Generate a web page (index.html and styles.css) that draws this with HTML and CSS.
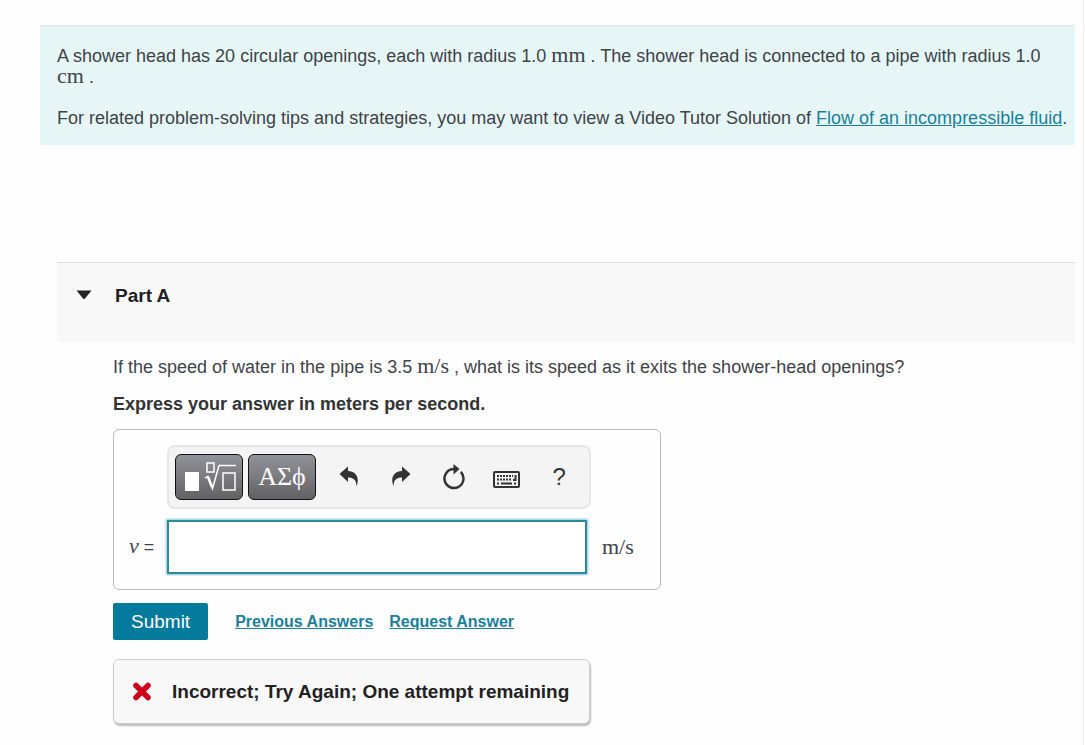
FILE: index.html
```html
<!DOCTYPE html>
<html lang="en">
<head>
    <meta charset="UTF-8">
    <meta name="viewport" content="width=device-width, initial-scale=1.0">
    <title>Shower Head Flow</title>
    <link rel="stylesheet" href="styles.css">
</head>
<body>

<main class="page">
    <section class="intro">
        <p>A shower head has 20 circular openings, each with radius 1.0 <span class="unit">mm</span> . The shower head is connected to a pipe with radius 1.0 <span class="unit">cm</span> .</p>
        <p>For related problem-solving tips and strategies, you may want to view a Video Tutor Solution of <a href="#">Flow of an incompressible fluid</a>.</p>
    </section>

    <section class="part">
        <header class="part-header">
            <button type="button" class="collapse" aria-label="Collapse Part A">
                <svg width="16" height="10" viewBox="0 0 16 10"><path d="M.5 .5h15L9 8.500q-1 1-2 0z" fill="#222"/></svg>
            </button>
            <h2>Part A</h2>
        </header>

        <form class="part-body">
            <p class="question">If the speed of water in the pipe is 3.5 <span class="unit">m/s</span> , what is its speed as it exits the shower-head openings?</p>
            <p class="instruction">Express your answer in meters per second.</p>

            <div class="answer-box">
                <div class="toolbar">
                    <button type="button" class="palette" aria-label="Templates">
                        <svg width="56" height="32" viewBox="0 0 56 32" fill="none" stroke="#fff">
                            <rect x="4" y="11" width="14" height="19" fill="#fff" stroke="none"/>
                            <rect x="26" y="2" width="7" height="9" stroke-width="1.500"/>
                            <path d="M24 17l3-1.500 4.500 12L38 4.500h17" stroke-width="1.500"/>
                            <path d="M27 16l4 10" stroke-width="2.500"/>
                            <rect x="42" y="12" width="12" height="17" stroke-width="1.500"/>
                        </svg>
                    </button>
                    <button type="button" class="palette" aria-label="Greek symbols">ΑΣϕ</button>
                    <button type="button" class="tool" aria-label="Undo">
                        <svg width="20" height="22" viewBox="0 0 20 22"><path d="M.5 8L9 .5V5c8 .2 12 6.500 8.500 15.500C17.500 14 14.500 11.500 9 11.500V16z" fill="#333"/></svg>
                    </button>
                    <button type="button" class="tool" aria-label="Redo">
                        <svg width="20" height="22" viewBox="0 0 20 22"><path d="M19.500 8L11 .5V5C3 5.200-1 11.500 2.500 20.500 2.500 14 5.500 11.500 11 11.500V16z" fill="#333"/></svg>
                    </button>
                    <button type="button" class="tool" aria-label="Reset">
                        <svg width="24" height="26" viewBox="0 0 24 26"><path d="M12 5a9.500 9.500 0 1 0 6.800 2.900" fill="none" stroke="#333" stroke-width="2.500"/><path d="M11.500 0l6 5-6 5.500z" fill="#333"/></svg>
                    </button>
                    <button type="button" class="tool keyboard" aria-label="Keyboard shortcuts">
                        <svg width="27" height="17" viewBox="0 0 27 17" fill="none" stroke="#333">
                            <rect x="1" y="1" width="25" height="15" rx="1" stroke-width="2"/>
                            <path d="M4 5h16M4 8.500h15" stroke-width="2" stroke-dasharray="2 1"/>
                            <path d="M22.500 4v5h-2.500" stroke-width="2"/>
                            <path d="M4 12.500h2M8 12.500h11M21 12.500h2" stroke-width="2"/>
                        </svg>
                    </button>
                    <button type="button" class="tool help" aria-label="Help">?</button>
                </div>
                <label class="variable" for="answer"><i>v</i> =</label>
                <input type="text" id="answer" class="answer">
                <span class="unit">m/s</span>
            </div>

            <div class="actions">
                <button type="submit" class="submit">Submit</button>
                <a href="#">Previous Answers</a>
                <a href="#">Request Answer</a>
            </div>

            <div class="feedback">
                <svg width="20" height="20" viewBox="0 0 20 20"><path d="M4 3.500l12 12M16 3.500l-12 12" stroke="#d0021b" stroke-width="5.500" stroke-linecap="round"/></svg>
                <span>Incorrect; Try Again; One attempt remaining</span>
            </div>
        </form>
    </section>
</main>

</body>
</html>
```
FILE: styles.css
```css
* {
    box-sizing: border-box;
}

body {
    margin: 0;
    background-color: #fefefe;
    color: #3e4347;
    font-family: "Liberation Sans", Arial, sans-serif;
    font-size: 18px;
    line-height: 21px;
}

p, h2 {
    margin: 0;
}

a {
    color: #1a7f9c;
}

button {
    font-family: inherit;
    cursor: pointer;
}

svg {
    display: block;
}

.page {
    min-height: 100vh;
    margin-right: 1px;
    padding: 25px 8px 20px 40px;
    border-right: 1px solid #eee;
}

.unit {
    font-family: "Liberation Serif", "Times New Roman", serif;
    font-size: 22px;
    line-height: 0;
}

.intro {
    display: flex;
    flex-direction: column;
    gap: 20px;
    padding: 20px 4px 16px 17px;
    border-top: 1px solid #dde6e5;
    background-color: #e6f6f7;
}

.part {
    margin: 117px 0 0 17px;
}

.part-header {
    display: flex;
    gap: 23px;
    height: 80px;
    padding: 22px 19px;
    border-top: 1px solid #ddd;
    background-color: #f8f8f8;
}

.collapse {
    align-self: flex-start;
    padding: 5px 0;
    border: none;
    background: none;
}

.part-header h2 {
    color: #222;
    font-size: 19px;
}

.part-body {
    padding: 15px 0 0 56px;
}

.instruction {
    margin-top: 16px;
    color: #333;
    font-weight: bold;
}

.answer-box {
    display: grid;
    grid-template-columns: 38px 420px auto;
    row-gap: 11px;
    align-items: center;
    width: fit-content;
    margin-top: 14px;
    padding: 15px 26px 15px 15px;
    border: 1px solid #bbb;
    border-radius: 6px;
}

.answer-box .unit {
    padding-left: 15px;
}

.toolbar {
    display: flex;
    grid-column: 2 / 4;
    align-items: center;
    gap: 5px;
    width: 424px;
    height: 64px;
    padding: 0 6px;
    border: 2px solid #e6e6e6;
    border-radius: 8px;
    background-color: #f4f4f4;
}

.palette {
    display: flex;
    align-items: center;
    justify-content: center;
    width: 68px;
    height: 46px;
    padding: 0;
    border: 1px solid #111;
    border-radius: 6px;
    background: linear-gradient(#92929a, #626264);
    color: #fff;
    font-family: "Liberation Serif", "Times New Roman", serif;
    font-size: 26px;
}

.tool {
    display: flex;
    flex: 1;
    align-items: center;
    justify-content: center;
    padding: 0;
    border: none;
    background: none;
    color: #333;
}

.palette + .tool {
    margin-left: 4px;
}

.keyboard {
    padding-top: 4px;
}

.help {
    font-size: 24px;
}

.variable {
    font-size: 18px;
}

.variable i {
    font-family: "Liberation Serif", "Times New Roman", serif;
    font-size: 22px;
    line-height: 0;
}

.answer {
    width: 100%;
    height: 54px;
    padding: 0 10px;
    border: 2px solid #2b8a9c;
    box-shadow: 0 0 2px 1px #8cc8dc;
    background-color: #fff;
    font-size: 20px;
    outline: none;
}

.actions {
    display: flex;
    align-items: center;
    gap: 16px;
    margin-top: 13px;
    font-size: 16px;
    font-weight: bold;
}

.submit {
    height: 37px;
    margin-right: 11px;
    padding: 0 18px;
    border: none;
    border-radius: 2px;
    background-color: #047a9c;
    color: #fff;
    font-size: 19px;
}

.feedback {
    display: flex;
    align-items: center;
    gap: 20px;
    width: fit-content;
    height: 65px;
    margin-top: 19px;
    padding: 0 20px 0 18px;
    border: 1px solid #ccc;
    border-radius: 6px;
    background-color: #f8f8f8;
    box-shadow: 1px 2px 2px #bbb;
    color: #222;
    font-size: 19px;
    font-weight: bold;
}
```
